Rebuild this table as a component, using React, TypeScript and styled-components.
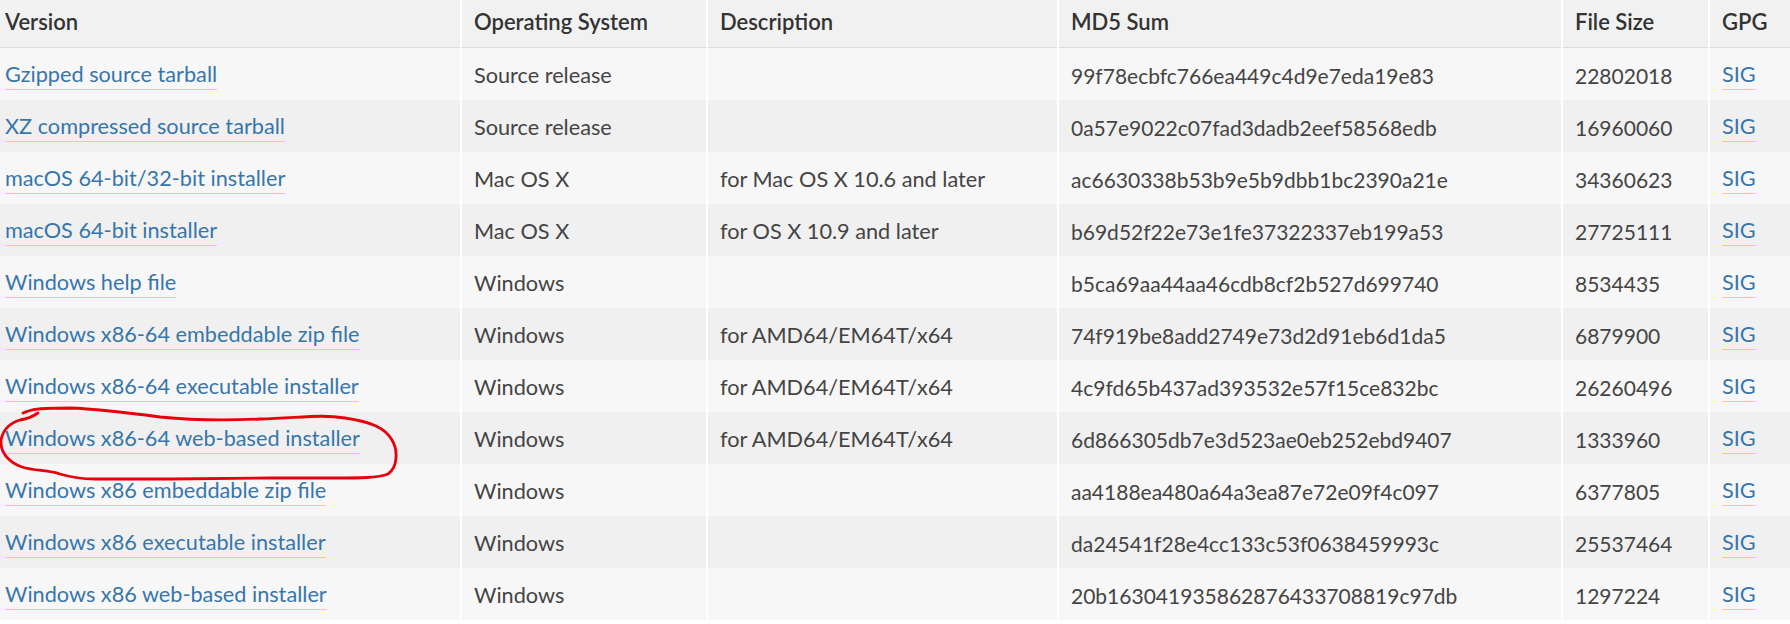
import React from "react";
import styled, { createGlobalStyle } from "styled-components";

const GlobalStyle = createGlobalStyle`
  html, body {
    margin: 0;
    padding: 0;
    background: #ffffff;
  }
  body {
    font-family: Lato, "Open Sans", "Liberation Sans", sans-serif;
    color: #444444;
    width: 1790px;
    height: 624px;
    overflow: hidden;
  }
`;

const COLS = "460px 244px 349px 502px 145px 1fr";

const Page = styled.div`
  position: relative;
  width: 1790px;
`;

const Table = styled.div`
  display: flex;
  flex-direction: column;
  background: #ffffff;
`;

const HeaderRow = styled.div`
  display: grid;
  grid-template-columns: ${COLS};
  column-gap: 2px;
  height: 48px;
`;

const HeadCell = styled.div<{ $first?: boolean }>`
  display: flex;
  align-items: center;
  padding: 0 0 5px ${(p) => (p.$first ? "5px" : "12px")};
  background: #f1f1f1;
  border-bottom: 1px solid #dcdcdc;
  font-size: 22px;
  font-weight: 600;
  color: #333333;
  white-space: nowrap;
`;

const Row = styled.div`
  display: grid;
  grid-template-columns: ${COLS};
  column-gap: 2px;
  height: 52px;
`;

const Cell = styled.div<{ $even: boolean; $first?: boolean }>`
  display: flex;
  align-items: center;
  padding: 2px 0 0 ${(p) => (p.$first ? "5px" : "12px")};
  background: ${(p) => (p.$even ? "#f0f0f0" : "#f7f7f7")};
  font-size: 21.7px;
  color: #444444;
  white-space: nowrap;
`;

const Figures = styled.span`
  font-size: 21px;
`;

const Link = styled.a`
  color: #3776ab;
  text-decoration: none;
  padding-bottom: 2px;
  border-bottom: 1px solid #ffd343;
  cursor: pointer;
`;

const Annotation = styled.svg`
  position: absolute;
  left: 0;
  top: 400px;
  width: 410px;
  height: 90px;
  pointer-events: none;
  overflow: visible;
`;

type Release = {
  version: string;
  os: string;
  description: string;
  md5: string;
  size: string;
};

const releases: Release[] = [
  { version: "Gzipped source tarball", os: "Source release", description: "", md5: "99f78ecbfc766ea449c4d9e7eda19e83", size: "22802018" },
  { version: "XZ compressed source tarball", os: "Source release", description: "", md5: "0a57e9022c07fad3dadb2eef58568edb", size: "16960060" },
  { version: "macOS 64-bit/32-bit installer", os: "Mac OS X", description: "for Mac OS X 10.6 and later", md5: "ac6630338b53b9e5b9dbb1bc2390a21e", size: "34360623" },
  { version: "macOS 64-bit installer", os: "Mac OS X", description: "for OS X 10.9 and later", md5: "b69d52f22e73e1fe37322337eb199a53", size: "27725111" },
  { version: "Windows help file", os: "Windows", description: "", md5: "b5ca69aa44aa46cdb8cf2b527d699740", size: "8534435" },
  { version: "Windows x86-64 embeddable zip file", os: "Windows", description: "for AMD64/EM64T/x64", md5: "74f919be8add2749e73d2d91eb6d1da5", size: "6879900" },
  { version: "Windows x86-64 executable installer", os: "Windows", description: "for AMD64/EM64T/x64", md5: "4c9fd65b437ad393532e57f15ce832bc", size: "26260496" },
  { version: "Windows x86-64 web-based installer", os: "Windows", description: "for AMD64/EM64T/x64", md5: "6d866305db7e3d523ae0eb252ebd9407", size: "1333960" },
  { version: "Windows x86 embeddable zip file", os: "Windows", description: "", md5: "aa4188ea480a64a3ea87e72e09f4c097", size: "6377805" },
  { version: "Windows x86 executable installer", os: "Windows", description: "", md5: "da24541f28e4cc133c53f0638459993c", size: "25537464" },
  { version: "Windows x86 web-based installer", os: "Windows", description: "", md5: "20b163041935862876433708819c97db", size: "1297224" },
];

const headers = ["Version", "Operating System", "Description", "MD5 Sum", "File Size", "GPG"];

export default function App() {
  return (
    <Page>
      <GlobalStyle />
      <Table>
        <HeaderRow>
          {headers.map((h, i) => (
            <HeadCell key={h} $first={i === 0}>
              {h}
            </HeadCell>
          ))}
        </HeaderRow>
        {releases.map((r, i) => {
          const even = i % 2 === 1;
          return (
            <Row key={r.version}>
              <Cell $even={even} $first>
                <Link>{r.version}</Link>
              </Cell>
              <Cell $even={even}>{r.os}</Cell>
              <Cell $even={even}>{r.description}</Cell>
              <Cell $even={even}>
                <Figures>{r.md5}</Figures>
              </Cell>
              <Cell $even={even}>
                <Figures>{r.size}</Figures>
              </Cell>
              <Cell $even={even}>
                <Link>SIG</Link>
              </Cell>
            </Row>
          );
        })}
      </Table>
      <Annotation viewBox="0 400 410 90">
        <path
          d="M38 413 C32 417 27 419 20 420 C10 423 3 430 1 440 C0 452 8 462 22 467 C35 471 48 470 60 474 C70 477 80 479 95 479 L170 479 L270 478 L335 478 C360 478 378 478 388 474 C398 467 398 450 392 440 C385 428 372 422 345 418 C320 414 300 418 260 419 C220 421 190 420 160 417 C130 413 100 409 70 408 C55 408 40 408 32 410 C28 411 25 412 23 413"
          fill="none"
          stroke="#e8000b"
          strokeWidth="2.8"
          strokeLinecap="round"
          strokeLinejoin="round"
        />
      </Annotation>
    </Page>
  );
}
